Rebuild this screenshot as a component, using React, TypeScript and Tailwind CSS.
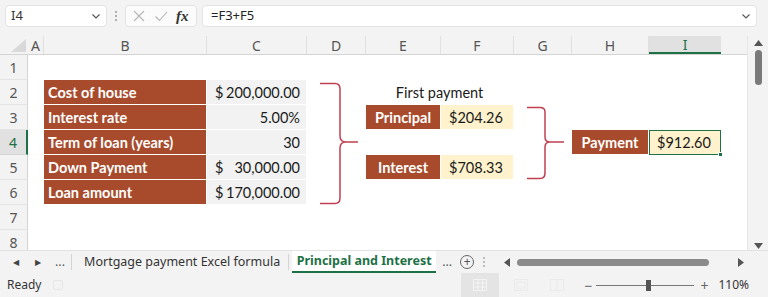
import type { ReactNode } from 'react';
import clsx from 'clsx';

const BROWN = 'bg-[#a84b2c]';
const CELL_FONT = "font-['Lato',sans-serif]";

/** Una celda de la hoja: ancho fijo y separadores blancos */
function Cell({
  w,
  className,
  edge = 'border-b border-r border-white',
  children,
}: {
  w: string;
  className?: string;
  edge?: string;
  children?: ReactNode;
}) {
  return (
    <div className={clsx('relative flex h-full shrink-0 items-center pt-px', edge, w, className)}>
      {children}
    </div>
  );
}

function Row({ n, selected, children }: { n: number; selected?: boolean; children?: ReactNode }) {
  return (
    <div className="flex h-[25px] shrink-0">
      <div
        className={clsx(
          'flex w-[28px] shrink-0 items-center justify-center border-b text-[14px]',
          selected
            ? 'border-b-[#d4d4d4] border-r-2 border-r-[#1e7145] bg-[#e1e1e1] text-[#1e7145]'
            : 'border-b-[#e4e4e4] border-r border-r-[#d4d4d4] bg-[#f3f3f3] text-[#555]',
        )}
      >
        {n}
      </div>
      <div className={clsx('flex flex-1 bg-white text-[14.5px] text-[#1a1a1a]', CELL_FONT)}>
        {children}
      </div>
    </div>
  );
}

function Label({ w, text, center }: { w: string; text: string; center?: boolean }) {
  return (
    <Cell
      w={w}
      className={clsx(BROWN, 'font-bold text-white', center ? 'justify-center' : 'pl-[4px]')}
    >
      {text}
    </Cell>
  );
}

function Money({ sign, amount }: { sign?: boolean; amount: string }) {
  return (
    <Cell w="w-[100px]" className="justify-between bg-[#f2f2f2] pl-[8px] pr-[6px]">
      <span>{sign ? '$' : ''}</span>
      <span>{amount}</span>
    </Cell>
  );
}

function Chevron() {
  return (
    <svg width="10" height="10" viewBox="0 0 10 10">
      <path d="M1.5 3.5 L5 7 L8.5 3.5" fill="none" stroke="#555" strokeWidth="1.1" />
    </svg>
  );
}

function FormulaBar() {
  return (
    <div className="flex h-[36px] items-start pt-[5px] text-[13px]">
      <div className="ml-[5px] flex h-[22px] w-[102px] items-center justify-between rounded-[4px] border border-[#e3e3e3] bg-white pl-[5px] pr-[5px] text-[#333]">
        <span>I4</span>
        <Chevron />
      </div>
      <div className="ml-[8px] flex h-[22px] flex-col items-center justify-center gap-[2px]">
        <span className="h-[2px] w-[2px] rounded-full bg-[#999]" />
        <span className="h-[2px] w-[2px] rounded-full bg-[#999]" />
        <span className="h-[2px] w-[2px] rounded-full bg-[#999]" />
      </div>
      <div className="ml-[8px] flex h-[22px] w-[72px] items-center gap-[8px] rounded-[4px] border border-[#e3e3e3] bg-[#fbfbfb] pl-[6px]">
        <svg width="14" height="14" viewBox="0 0 14 14">
          <path d="M2 2 L12 12 M12 2 L2 12" stroke="#b5b5b5" strokeWidth="1.1" />
        </svg>
        <svg width="14" height="14" viewBox="0 0 14 14">
          <path d="M1.5 7.5 L5.5 11.5 L13 3" fill="none" stroke="#b5b5b5" strokeWidth="1.1" />
        </svg>
        <span className="font-['Liberation_Serif',serif] text-[15px] font-bold italic text-[#333]">
          fx
        </span>
      </div>
      <div className="ml-[5px] flex h-[22px] w-[555px] items-center justify-between rounded-[4px] border border-[#e3e3e3] bg-white pl-[8px] pr-[5px] text-[#222]">
        <span>=F3+F5</span>
        <Chevron />
      </div>
    </div>
  );
}

const headers: { label: string; w: string; selected?: boolean }[] = [
  { label: 'A', w: 'w-[16px]' },
  { label: 'B', w: 'w-[163px]' },
  { label: 'C', w: 'w-[100px]' },
  { label: 'D', w: 'w-[59px]' },
  { label: 'E', w: 'w-[75px]' },
  { label: 'F', w: 'w-[73px]' },
  { label: 'G', w: 'w-[58px]' },
  { label: 'H', w: 'w-[77px]' },
  { label: 'I', w: 'w-[72px]', selected: true },
  { label: '', w: 'w-[26px]' },
];

function HeaderRow() {
  return (
    <div className="flex h-[19px] shrink-0 border-b border-[#d4d4d4] text-[14px] text-[#555]">
      <div className="flex w-[28px] shrink-0 items-end justify-end pb-[2px] pr-[2px]">
        <svg width="15" height="13" viewBox="0 0 15 13">
          <polygon points="15,0 15,13 0,13" fill="#d9d9d9" />
        </svg>
      </div>
      {headers.map((h, i) => (
        <div
          key={i}
          className={clsx(
            'flex h-full shrink-0 items-center justify-center',
            h.w,
            h.selected
              ? 'border-b-2 border-[#1e7145] bg-[#e1e1e1] text-[#1e7145]'
              : i < headers.length - 1 && 'border-r border-[#e0e0e0]',
          )}
        >
          {h.label}
        </div>
      ))}
    </div>
  );
}

function Grid() {
  return (
    <div className="flex w-[747px] flex-col overflow-hidden">
      <HeaderRow />
      <Row n={1} />
      <Row n={2}>
        <Cell w="w-[16px]" />
        <Label w="w-[163px]" text="Cost of house" />
        <Money sign amount="200,000.00" />
        <Cell w="w-[59px]" />
        <Cell w="w-[148px]" className="justify-center">
          First payment
        </Cell>
      </Row>
      <Row n={3}>
        <Cell w="w-[16px]" />
        <Label w="w-[163px]" text="Interest rate" />
        <Money amount="5.00%" />
        <Cell w="w-[59px]" />
        <Label w="w-[75px]" text="Principal" center />
        <Cell w="w-[73px]" className="bg-[#fff2cc] pl-[8px]">
          $204.26
        </Cell>
      </Row>
      <Row n={4} selected>
        <Cell w="w-[16px]" />
        <Label w="w-[163px]" text="Term of loan (years)" />
        <Money amount="30" />
        <Cell w="w-[59px]" />
        <Cell w="w-[75px]" />
        <Cell w="w-[73px]" />
        <Cell w="w-[58px]" />
        <Label w="w-[77px]" text="Payment" center />
        <Cell
          w="w-[72px]"
          edge="border border-[#1e7145]"
          className="bg-[#fff2cc] pl-[7px]"
        >
          $912.60
          <span className="absolute -bottom-[3px] -right-[3px] h-[5px] w-[5px] border border-white bg-[#1e7145]" />
        </Cell>
      </Row>
      <Row n={5}>
        <Cell w="w-[16px]" />
        <Label w="w-[163px]" text="Down Payment" />
        <Money sign amount="30,000.00" />
        <Cell w="w-[59px]" />
        <Label w="w-[75px]" text="Interest" center />
        <Cell w="w-[73px]" className="bg-[#fff2cc] pl-[8px]">
          $708.33
        </Cell>
      </Row>
      <Row n={6}>
        <Cell w="w-[16px]" />
        <Label w="w-[163px]" text="Loan amount" />
        <Money sign amount="170,000.00" />
      </Row>
      <Row n={7} />
      <Row n={8} />
    </div>
  );
}

function VScroll() {
  return (
    <div className="flex w-[21px] flex-col items-center border-l border-[#e6e6e6] bg-[#f3f3f3] pt-[4px]">
      <svg width="9" height="6" viewBox="0 0 9 6">
        <polygon points="4.5,0 9,6 0,6" fill="#555" />
      </svg>
      <div className="mt-[4px] h-[35px] w-[7px] rounded-full bg-[#7a7a7a]" />
      <div className="flex-1" />
      <svg width="9" height="6" viewBox="0 0 9 6" className="mb-[1px]">
        <polygon points="0,0 9,0 4.5,6" fill="#555" />
      </svg>
    </div>
  );
}

function TabBar() {
  return (
    <div className="flex h-[23px] items-center whitespace-nowrap border-t border-[#e2e2e2] bg-[#f3f3f3] text-[12.5px] text-[#333]">
      <div className="flex h-full w-[500px] shrink-0 items-center">
        <span className="ml-[13px] text-[8px] text-[#444]">◀</span>
        <span className="ml-[16px] text-[8px] text-[#444]">▶</span>
        <span className="ml-[14px] text-[#555]">...</span>
        <span className="ml-[6px] h-[16px] w-px bg-[#d4d4d4]" />
        <span className="ml-[12px]">Mortgage payment Excel formula</span>
        <span className="ml-[8px] h-[16px] w-px bg-[#d4d4d4]" />
        <div className="ml-[3px] flex h-full w-[144px] shrink-0 items-center justify-center border-b-2 border-[#1e7145] bg-white font-bold text-[#1e7145]">
          Principal and Interest
        </div>
        <span className="ml-[6px] text-[#555]">...</span>
        <span className="ml-[8px] flex h-[14px] w-[14px] items-center justify-center rounded-full border border-[#666] text-[12px] leading-none text-[#555]">
          +
        </span>
        <span className="ml-[9px] flex flex-col gap-[2px]">
          <span className="h-[2px] w-[2px] rounded-full bg-[#aaa]" />
          <span className="h-[2px] w-[2px] rounded-full bg-[#aaa]" />
          <span className="h-[2px] w-[2px] rounded-full bg-[#aaa]" />
        </span>
      </div>
      <svg width="6" height="9" viewBox="0 0 6 9" className="ml-[4px]">
        <polygon points="6,0 6,9 0,4.5" fill="#555" />
      </svg>
      <div className="ml-[7px] h-[7px] w-[192px] rounded-full bg-[#8a8a8a]" />
      <svg width="6" height="9" viewBox="0 0 6 9" className="ml-[29px]">
        <polygon points="0,0 6,4.5 0,9" fill="#555" />
      </svg>
    </div>
  );
}

function StatusBar() {
  return (
    <div className="flex h-[24px] items-center bg-[#f3f3f3] text-[12px] text-[#333]">
      <span className="ml-[7px]">Ready</span>
      <span className="ml-[12px] h-[10px] w-[10px] rounded-[2px] border border-[#e6e6e6]" />
      <div className="flex-1" />
      <div className="flex h-full w-[38px] items-center justify-center bg-[#e4e4e4]">
        <svg width="14" height="12" viewBox="0 0 14 12">
          <path
            d="M0.5 0.5h13v11h-13z M0.5 4h13 M0.5 8h13 M5 0.5v11 M9.5 0.5v11"
            fill="none"
            stroke="#f4f4f4"
            strokeWidth="1"
          />
        </svg>
      </div>
      <div className="ml-[15px] flex h-full items-center">
        <svg width="14" height="12" viewBox="0 0 14 12">
          <path d="M0.5 0.5h13v11h-13z M3 3h8v6h-8z" fill="none" stroke="#eaeaea" strokeWidth="1" />
        </svg>
      </div>
      <div className="ml-[22px] flex h-full items-center">
        <svg width="14" height="12" viewBox="0 0 14 12">
          <path d="M0.5 0.5h13v11h-13z M7 0.5v11" fill="none" stroke="#eaeaea" strokeWidth="1" />
        </svg>
      </div>
      <span className="ml-[20px] text-[14px] text-[#666]">−</span>
      <div className="relative ml-[4px] h-px w-[98px] bg-[#777]">
        <span className="absolute -top-[5px] left-[50px] h-[11px] w-[5px] bg-[#555]" />
      </div>
      <span className="ml-[6px] text-[14px] text-[#666]">+</span>
      <span className="ml-[10px] mr-[19px]">110%</span>
    </div>
  );
}

/** Llaves rojas dibujadas sobre la hoja */
function Brackets() {
  return (
    <svg
      className="pointer-events-none absolute left-0 top-0"
      width="768"
      height="297"
      viewBox="0 0 768 297"
      fill="none"
      stroke="#bf4150"
      strokeWidth="1.5"
    >
      <path d="M320 83.5 H335 Q340 83.5 340 89 V136 Q340 142 346 142 H358 M346 142 Q340 142 340 148 V198 Q340 203.5 335 203.5 H320" />
      <path d="M527 107.5 H540 Q545 107.5 545 112 V137 Q545 142 550 142 H564 M550 142 Q545 142 545 147 V173 Q545 178.5 540 178.5 H527" />
    </svg>
  );
}

export default function App() {
  return (
    <div className="relative h-[297px] w-[768px] overflow-hidden bg-[#f3f3f3] font-['Noto_Sans',sans-serif] text-[#262626]">
      <FormulaBar />
      <div className="flex h-[214px]">
        <Grid />
        <VScroll />
      </div>
      <TabBar />
      <StatusBar />
      <Brackets />
    </div>
  );
}
